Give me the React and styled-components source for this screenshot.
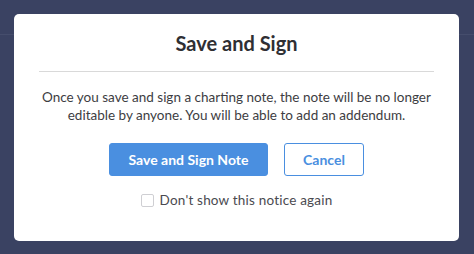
import React, { useState } from "react";
import styled, { createGlobalStyle } from "styled-components";

const Global = createGlobalStyle`
  html, body { margin: 0; padding: 0; }
  body {
    width: 474px;
    height: 254px;
    overflow: hidden;
    font-family: "Lato", "Noto Sans", sans-serif;
  }
`;

const Backdrop = styled.div`
  width: 474px;
  height: 254px;
  box-sizing: border-box;
  padding: 14px 15px 13px 14px;
  background:
    linear-gradient(to bottom, transparent 34px, #454d6c 34px, #454d6c 35px, transparent 35px),
    #3a4262;
`;

const Modal = styled.div`
  width: 445px;
  height: 227px;
  box-sizing: border-box;
  background: #fff;
  border-radius: 5px;
  padding: 17px 25px 0;
  display: flex;
  flex-direction: column;
  align-items: center;
`;

const Title = styled.h2`
  margin: 0;
  font-size: 20px;
  line-height: 24px;
  font-weight: 700;
  color: #2f2f33;
  letter-spacing: 0;
`;

const Divider = styled.hr`
  align-self: stretch;
  margin: 16px 0 0;
  border: 0;
  height: 1px;
  background: #d9d9d9;
`;

const Message = styled.p`
  margin: 16px 0 0;
  font-size: 13.5px;
  line-height: 18px;
  color: #3d3d42;
  text-align: center;
  white-space: nowrap;
`;

const Actions = styled.div`
  margin-top: 19px;
  display: flex;
  gap: 16px;
`;

const Button = styled.button`
  height: 33px;
  box-sizing: border-box;
  border-radius: 3px;
  font-family: inherit;
  font-size: 14px;
  font-weight: 700;
  cursor: pointer;
  width: ${(p) => p.$w}px;
  border: 1px solid #4a8fe0;
  background: ${(p) => (p.$primary ? "#4a8fe0" : "#fff")};
  color: ${(p) => (p.$primary ? "#fff" : "#4a8fe0")};
`;

const CheckRow = styled.label`
  margin-top: 15px;
  display: flex;
  align-items: center;
  gap: 6px;
  height: 18px;
  font-size: 13.5px;
  color: #4a4a50;
  letter-spacing: 0.2px;
  cursor: pointer;
`;

const Box = styled.span`
  width: 13px;
  height: 13px;
  box-sizing: border-box;
  border: 1px solid #cfcfd3;
  border-radius: 2px;
  background: #fff;
`;

export default function App() {
  const [checked, setChecked] = useState(false);
  return (
    <>
      <Global />
      <Backdrop>
        <Modal>
          <Title>Save and Sign</Title>
          <Divider />
          <Message>
            Once you save and sign a charting note, the note will be no longer
            <br />
            editable by anyone. You will be able to add an addendum.
          </Message>
          <Actions>
            <Button $primary $w={159}>Save and Sign Note</Button>
            <Button $w={80}>Cancel</Button>
          </Actions>
          <CheckRow onClick={() => setChecked(!checked)}>
            <Box />
            Don't show this notice again
          </CheckRow>
        </Modal>
      </Backdrop>
    </>
  );
}
